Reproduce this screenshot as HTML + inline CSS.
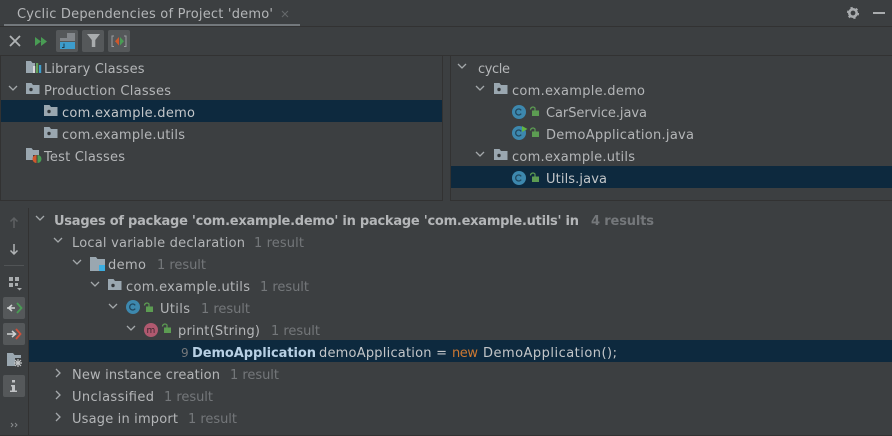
<!DOCTYPE html>
<html><head><meta charset="utf-8"><style>
html,body{margin:0;padding:0;background:#3c3f41;width:892px;height:436px;overflow:hidden}
svg{display:block}
text{font-family:"DejaVu Sans","Liberation Sans",sans-serif;font-size:13px;fill:#b4b6b8}
.g{fill:#74777a}
.b{font-weight:bold}
.h{fill:#c3c6c9}
.hb{fill:#b8d0e4;font-weight:bold}
.o{fill:#cc7832}
.c{fill:none;stroke:#a4a8ab;stroke-width:1.3}
</style></head><body>
<svg width="892" height="436" viewBox="0 0 892 436" xmlns="http://www.w3.org/2000/svg">
<defs>
<g id="pkg"><path d="M1 1h5.500l1.500 2h6.500v9H1z" fill="#9aa7b0"/><circle cx="6" cy="7.500" r="1.700" fill="#33373a"/></g>
<path id="down" class="c" d="M0 -1l4 4 4-4"/>
<path id="right" class="c" d="M0 -1l4 4-4 4"/>
<g id="lock"><path d="M1.500 3.500a2.500 2.500 0 0 1 4.500-1.500v3" fill="none" stroke="#5c9c52" stroke-width="1.200"/><rect x="3" y="4.500" width="7" height="5.500" fill="#5c9c52"/></g>
<g id="cls"><circle cx="7" cy="7" r="7" fill="#3d88ae"/><path d="M9.200 5.400a3 3 0 1 0 0 3.200" fill="none" stroke="#21485f" stroke-width="1.300"/></g>
</defs>
<rect width="892" height="436" fill="#3c3f41"/>

<!-- tab bar -->
<text x="17" y="18" textLength="256" lengthAdjust="spacing" fill="#b4b6b8">Cyclic Dependencies of Project 'demo'</text>
<path d="M282 11l6 6m0-6l-6 6" stroke="#65686a" stroke-width="1.100"/>
<rect x="4" y="24" width="296" height="2.500" fill="#73787c"/>
<rect y="26" width="892" height="1" fill="#323232"/>
<circle cx="853" cy="13" r="3.700" fill="none" stroke="#a9acae" stroke-width="2.600"/>
<circle cx="853" cy="13" r="5.300" fill="none" stroke="#a9acae" stroke-width="1.600" stroke-dasharray="2.300 3.250"/>
<rect x="873" y="12" width="12" height="2" fill="#a9acae"/>

<!-- toolbar -->
<path d="M10 36l10 10m0-10l-10 10" stroke="#b0b3b5" stroke-width="1.800"/>
<path d="M35 37l6 4.500-6 4.500zM41 37l6 4.500-6 4.500z" fill="#499c54"/>
<rect x="56" y="30" width="22" height="22" rx="2" fill="#55585a"/>
<rect x="60" y="42" width="15" height="7" fill="#3d9ccc"/>
<path d="M67 33h8v8H60v-3h7z" fill="#82868a"/>
<path d="M64 43.500v4h-2" stroke="#1c3a4c" fill="none"/>
<rect x="82" y="30" width="22" height="22" rx="2" fill="#55585a"/>
<path d="M87 34h13l-4.700 6v7h-3.500v-7z" fill="#a9acae"/>
<rect x="108" y="30" width="22" height="22" rx="2" fill="#55585a"/>
<path d="M114 36h-2v10.500h2M124 36h2v10.500h-2" fill="none" stroke="#9a9da0"/>
<path d="M119 37v8.500l-4-4.250z" fill="#d0582c"/><path d="M120 37v8.500l4-4.250z" fill="#499c54"/>
<rect y="55" width="892" height="1" fill="#323232"/>

<!-- left panel -->
<rect x="0" y="55" width="1" height="146" fill="#323232"/>
<rect x="442" y="55" width="1" height="146" fill="#323232"/>
<rect x="450" y="55" width="1" height="146" fill="#323232"/>
<rect y="200" width="443" height="1" fill="#323232"/>
<rect x="451" y="200" width="441" height="1" fill="#323232"/>

<rect x="1" y="100" width="441" height="22" fill="#0d293e"/>
<path d="M26 61h5l1.500 2H35v10h-9z" fill="#9aa7b0"/><rect x="33" y="66" width="2.200" height="7" fill="#d8dadb"/><rect x="36" y="63" width="2.200" height="10" fill="#62a05a"/><rect x="39" y="65" width="2.200" height="8" fill="#3d9ccc"/>
<text x="44" y="73" textLength="100.500" lengthAdjust="spacing">Library Classes</text>
<use href="#down" x="9" y="87"/>
<use href="#pkg" x="25" y="82"/>
<text x="44" y="95" textLength="127" lengthAdjust="spacing">Production Classes</text>
<use href="#pkg" x="43" y="104"/>
<text x="62" y="117" textLength="133" lengthAdjust="spacing" class="h">com.example.demo</text>
<use href="#pkg" x="43" y="126"/>
<text x="62" y="139" textLength="123" lengthAdjust="spacing">com.example.utils</text>
<path d="M26 148h5.500l1.500 2h6v5h-6v5h-7z" fill="#9aa7b0"/><path d="M36.500 155v8a4 4 0 0 1 0-8z" fill="#d0582c"/><path d="M37.500 155v8a4 4 0 0 0 0-8z" fill="#499c54"/>
<text x="44" y="161" textLength="81" lengthAdjust="spacing">Test Classes</text>

<!-- right panel -->
<rect x="451" y="166" width="441" height="22" fill="#0d293e"/>
<use href="#down" x="458" y="65"/>
<text x="478" y="73" textLength="32" lengthAdjust="spacing">cycle</text>
<use href="#down" x="476" y="87"/>
<use href="#pkg" x="493" y="82"/>
<text x="512" y="95" textLength="133" lengthAdjust="spacing">com.example.demo</text>
<use href="#cls" x="512" y="105"/><use href="#lock" x="529" y="106"/>
<text x="546" y="117" textLength="101" lengthAdjust="spacing">CarService.java</text>
<use href="#cls" x="512" y="126"/><path d="M522 126l5.500 3-5.500 3z" fill="#62b543"/><use href="#lock" x="529" y="127"/>
<text x="546" y="139" textLength="148" lengthAdjust="spacing">DemoApplication.java</text>
<use href="#down" x="476" y="153"/>
<use href="#pkg" x="493" y="148"/>
<text x="512" y="161" textLength="123" lengthAdjust="spacing">com.example.utils</text>
<use href="#cls" x="512" y="171"/><use href="#lock" x="529" y="172"/>
<text x="546" y="183" textLength="61" lengthAdjust="spacing" class="h">Utils.java</text>

<!-- bottom side toolbar -->
<rect x="28" y="208" width="1" height="228" fill="#323232"/>
<path d="M14 228v-10m-3.500 3.500l3.500-3.500 3.500 3.500" fill="none" stroke="#5e6163" stroke-width="1.500"/>
<path d="M14 244v10m-3.500-3.500l3.500 3.500 3.500-3.500" fill="none" stroke="#b0b3b5" stroke-width="1.500"/>
<rect x="4" y="265" width="20" height="1" fill="#515456"/>
<path d="M9 277h4v4H9zM15 277h4v4h-4zM9 283h4v4H9zM15 283h3v3h-3z" fill="#a9acae"/>
<path d="M17 288h5l-2.500 2.500z" fill="#a9acae"/>
<rect x="3" y="297" width="22" height="22" rx="2" fill="#55585a"/>
<path d="M17 303l4.500 5-4.500 5" fill="none" stroke="#499c54" stroke-width="1.800"/>
<path d="M7 308h8m-3-3l-3.500 3 3.500 3" fill="none" stroke="#d0d2d3" stroke-width="1.500"/>
<rect x="3" y="323" width="22" height="22" rx="2" fill="#55585a"/>
<path d="M16 329l4.500 5-4.500 5" fill="none" stroke="#d0503a" stroke-width="1.800"/>
<path d="M7 334h8m-3-3l3.500 3-3.500 3" fill="none" stroke="#d0d2d3" stroke-width="1.500"/>
<path d="M7 353h6l1.500 2H21v3h-6v8H7z" fill="#9aa7b0"/>
<path d="M18 359v8m-4-4h8m-7-3l6 6m0-6l-6 6" stroke="#c4c6c8" stroke-width="1.200"/>
<rect x="3" y="375" width="22" height="22" rx="2" fill="#55585a"/>
<path d="M12 380h3v2.500h-3zM11 385h4v5.500h2v1.500h-7v-1.500h2v-4h-1z" fill="#c0c2c4"/>
<path d="M11 423l2 2-2 2M15 423l2 2-2 2" fill="none" stroke="#888b8d" stroke-width="1"/>

<!-- usages tree -->
<rect x="29" y="340" width="863" height="22" fill="#0d293e"/>
<use href="#down" x="36" y="217"/>
<text x="54" y="225" textLength="525" lengthAdjust="spacing" class="b">Usages of package 'com.example.demo' in package 'com.example.utils' in</text>
<text x="591" y="225" textLength="63" lengthAdjust="spacing" class="b g">4 results</text>

<use href="#down" x="54" y="239"/>
<text x="72" y="247" textLength="173" lengthAdjust="spacing">Local variable declaration</text>
<text x="254" y="247" textLength="50" lengthAdjust="spacing" class="g">1 result</text>

<use href="#down" x="73" y="261"/>
<path d="M90 257h6l1.500 2H105v6h-6v6h-9z" fill="#9aa7b0"/><rect x="99" y="265" width="6" height="6" fill="#3caee0"/>
<text x="108" y="269" textLength="38" lengthAdjust="spacing">demo</text>
<text x="157" y="269" textLength="49" lengthAdjust="spacing" class="g">1 result</text>

<use href="#down" x="91" y="283"/>
<use href="#pkg" x="107" y="278"/>
<text x="126" y="291" textLength="124" lengthAdjust="spacing">com.example.utils</text>
<text x="260" y="291" textLength="49" lengthAdjust="spacing" class="g">1 result</text>

<use href="#down" x="109" y="305"/>
<use href="#cls" x="126" y="300"/><use href="#lock" x="143" y="302"/>
<text x="160" y="313" textLength="30" lengthAdjust="spacing">Utils</text>
<text x="201" y="313" textLength="49" lengthAdjust="spacing" class="g">1 result</text>

<use href="#down" x="127" y="327"/>
<circle cx="151" cy="330" r="7" fill="#b0596f"/>
<text x="146.500" y="333" style="font-size:9px;fill:#3c2730">m</text>
<use href="#lock" x="161" y="323"/>
<text x="178" y="335" textLength="82" lengthAdjust="spacing">print(String)</text>
<text x="271" y="335" textLength="49" lengthAdjust="spacing" class="g">1 result</text>

<text x="181" y="357" style="font-size:12px" class="g">9</text>
<text x="192" y="357" textLength="124" lengthAdjust="spacing" class="hb">DemoApplication</text>
<text x="319" y="357" textLength="128" lengthAdjust="spacing" class="h">demoApplication =</text>
<text x="452" y="357" textLength="26" lengthAdjust="spacing" class="o">new</text>
<text x="483" y="357" textLength="134" lengthAdjust="spacing" class="h">DemoApplication();</text>

<use href="#right" x="56" y="370"/>
<text x="72" y="379" textLength="148" lengthAdjust="spacing">New instance creation</text>
<text x="230" y="379" textLength="49" lengthAdjust="spacing" class="g">1 result</text>
<use href="#right" x="56" y="392"/>
<text x="72" y="401" textLength="82" lengthAdjust="spacing">Unclassified</text>
<text x="164" y="401" textLength="49" lengthAdjust="spacing" class="g">1 result</text>
<use href="#right" x="56" y="414"/>
<text x="72" y="423" textLength="106" lengthAdjust="spacing">Usage in import</text>
<text x="188" y="423" textLength="49" lengthAdjust="spacing" class="g">1 result</text>
<rect y="435" width="892" height="1" fill="#323232"/>
</svg>
</body></html>
